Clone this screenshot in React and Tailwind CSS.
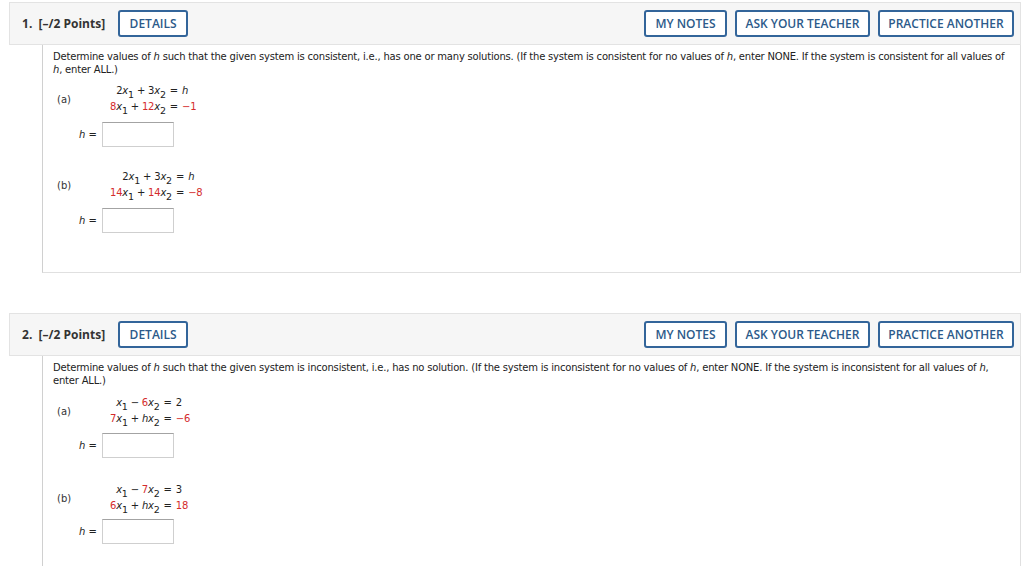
import React from "react";

const body = { fontFamily: '"DejaVu Sans", Verdana, sans-serif' };
const head = { fontFamily: '"Open Sans", Arial, sans-serif' };

function X({ n }) {
  return (
    <>
      <i>x</i>
      <span className="relative top-[4px] text-[9.5px]">{n}</span>
    </>
  );
}
const R = ({ children }) => <span className="text-[#d42b2b]">{children}</span>;

function Btn({ children, w }) {
  return (
    <div className={`h-[27px] ${w} flex items-center justify-center border-2 border-[#33659a] rounded-[3px] bg-white text-[#2c5a8a] text-[12px] font-semibold`}>
      {children}
    </div>
  );
}

function Header({ num }) {
  return (
    <div
      className="h-[43px] flex items-center bg-[#f6f6f6] border border-[#e3e3e3] pl-[12px] pr-[6px]"
      style={head}
    >
      <span className="text-[12px] font-bold text-[#333] whitespace-pre">{num}.  [–/2 Points]</span>
      <div className="ml-[13px]">
        <Btn w="w-[70px]">DETAILS</Btn>
      </div>
      <div className="ml-auto flex gap-[8px]">
        <Btn w="w-[83px]">MY NOTES</Btn>
        <Btn w="w-[135px]">ASK YOUR TEACHER</Btn>
        <Btn w="w-[136px]">PRACTICE ANOTHER</Btn>
      </div>
    </div>
  );
}

function Eq({ label, l1, r1, l2, r2, mt }) {
  return (
    <div className="flex items-center" style={{ marginTop: mt }}>
      <div className="w-[57px] pl-[4px] text-[10px] text-[#333]">{label}</div>
      <div className="grid grid-cols-[auto_auto_auto] text-[10px] tracking-[-0.2px] leading-[16px] text-[#222]">
        <div className="text-right whitespace-pre">{l1}</div>
        <div className="px-[4px]">=</div>
        <div>{r1}</div>
        <div className="text-right whitespace-pre">{l2}</div>
        <div className="px-[4px]">=</div>
        <div>{r2}</div>
      </div>
    </div>
  );
}

function HInput({ mt }) {
  return (
    <div className="flex items-center" style={{ marginTop: mt }}>
      <div className="w-[49px] text-right pr-[5px] text-[10px] text-[#222]">
        <i>h</i> =
      </div>
      <div className="w-[72px] h-[25px] bg-white border border-[#cfcfcf] border-t-[#a3a3a3]" />
    </div>
  );
}

const P = ({ children }) => (
  <p className="text-[10px] tracking-[-0.2px] leading-[13px] text-[#222]">{children}</p>
);

export default function App() {
  return (
    <div className="w-[1024px] h-[566px] bg-white overflow-hidden pt-[2px]" style={body}>
      <div className="ml-[9px] w-[1012px]">
        <Header num="1" />
        <div className="ml-[33px] border-l border-r border-b border-[#e0e0e0] border-l-[#d0d0d0] pl-[10px] pr-[12px] pt-[5px] pb-[39px]">
          <P>
            Determine values of <i>h</i> such that the given system is consistent, i.e., has one or many solutions. (If the system is consistent for no values of <i>h</i>, enter NONE. If the system is consistent for all values of <i>h</i>, enter ALL.)
          </P>
          <Eq
            mt={7}
            label="(a)"
            l1={<>2<X n="1" /> + 3<X n="2" /></>}
            r1={<i>h</i>}
            l2={<><R>8</R><X n="1" /> + <R>12</R><X n="2" /></>}
            r2={<R>−1</R>}
          />
          <HInput mt={7} />
          <Eq
            mt={22}
            label="(b)"
            l1={<>2<X n="1" /> + 3<X n="2" /></>}
            r1={<i>h</i>}
            l2={<><R>14</R><X n="1" /> + <R>14</R><X n="2" /></>}
            r2={<R>−8</R>}
          />
          <HInput mt={7} />
        </div>
        <div className="h-[40px]" />
        <Header num="2" />
        <div className="ml-[33px] border-l border-r border-[#e0e0e0] border-l-[#d0d0d0] pl-[10px] pr-[12px] pt-[5px] pb-[40px]">
          <P>
            Determine values of <i>h</i> such that the given system is inconsistent, i.e., has no solution. (If the system is inconsistent for no values of <i>h</i>, enter NONE. If the system is inconsistent for all values of <i>h</i>, enter ALL.)
          </P>
          <Eq
            mt={8}
            label="(a)"
            l1={<><X n="1" /> − <R>6</R><X n="2" /></>}
            r1="2"
            l2={<><R>7</R><X n="1" /> + <i>h</i><X n="2" /></>}
            r2={<R>−6</R>}
          />
          <HInput mt={6} />
          <Eq
            mt={24}
            label="(b)"
            l1={<><X n="1" /> − <R>7</R><X n="2" /></>}
            r1="3"
            l2={<><R>6</R><X n="1" /> + <i>h</i><X n="2" /></>}
            r2={<R>18</R>}
          />
          <HInput mt={5} />
        </div>
      </div>
    </div>
  );
}
